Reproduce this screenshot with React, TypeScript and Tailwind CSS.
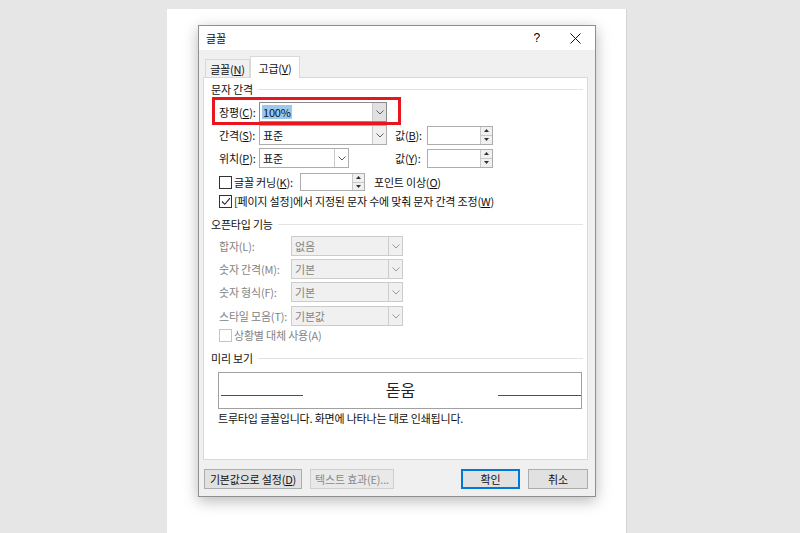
import React from "react";

const F = "font-['Noto_Sans_CJK_KR','Noto_Sans',sans-serif] tracking-[-0.2px]";

function Chevron({ color = "#606060" }: { color?: string }) {
  return (
    <svg width="8" height="5" viewBox="0 0 8 5">
      <path d="M0.5 0.5 L4 4 L7.5 0.5" fill="none" stroke={color} strokeWidth="1" />
    </svg>
  );
}

function Combo({
  w,
  value,
  disabled,
  arrowBg = "bg-[#f0f0f0]",
  selected,
  highlight,
}: {
  w: string;
  value: string;
  disabled?: boolean;
  arrowBg?: string;
  selected?: boolean;
  highlight?: boolean;
}) {
  return (
    <div
      className={`${w} h-[20px] flex border ${
        disabled ? "border-[#cccccc] bg-[#f0f0f0]" : highlight ? "border-[#8a8a8a] bg-white" : "border-[#adadad] bg-white"
      }`}
    >
      <div className="flex-1 flex items-center pl-[2px]">
        <span
          className={`text-[11px] leading-[14px] px-[1px] ${
            disabled ? "text-[#838383]" : "text-[#111]"
          } ${selected ? "bg-[#99c9ef]" : ""}`}
        >
          {value}
        </span>
      </div>
      <div
        className={`w-[14px] h-full flex items-center justify-center border-l ${
          disabled ? "border-[#cccccc] bg-[#f0f0f0]" : `border-[#c8c8c8] ${arrowBg}`
        }`}
      >
        <Chevron color={disabled ? "#9a9a9a" : "#606060"} />
      </div>
    </div>
  );
}

function Spin({ w, h = "h-[19px]" }: { w: string; h?: string }) {
  return (
    <div className={`${w} ${h} flex border border-[#adadad] bg-white`}>
      <div className="flex-1" />
      <div className="w-[12px] h-full flex flex-col border-l border-[#c8c8c8] bg-[#f0f0f0]">
        <div className="flex-1 flex items-center justify-center border-b border-[#c8c8c8]">
          <svg width="5" height="3" viewBox="0 0 5 3">
            <path d="M0 3 L2.5 0 L5 3 Z" fill="#303030" />
          </svg>
        </div>
        <div className="flex-1 flex items-center justify-center">
          <svg width="5" height="3" viewBox="0 0 5 3">
            <path d="M0 0 L2.5 3 L5 0 Z" fill="#303030" />
          </svg>
        </div>
      </div>
    </div>
  );
}

function Check({ checked, disabled }: { checked?: boolean; disabled?: boolean }) {
  return (
    <div
      className={`w-[13px] h-[13px] border bg-white flex items-center justify-center shrink-0 ${
        disabled ? "border-[#c4c4c4]" : "border-[#333333]"
      }`}
    >
      {checked && (
        <svg width="10" height="9" viewBox="0 0 10 9">
          <path d="M1 4.5 L3.8 7.3 L9 1.2" fill="none" stroke="#222" strokeWidth="1.1" />
        </svg>
      )}
    </div>
  );
}

function Header({ text }: { text: string }) {
  return (
    <div className="h-[14px] flex items-center pl-[7px] pr-[4px]">
      <span className="text-[11px] leading-[14px] text-[#111] whitespace-nowrap">{text}</span>
      <div className="flex-1 h-px bg-[#e3e3e3] ml-[5px]" />
    </div>
  );
}

function Lbl({ children, w, disabled }: { children: React.ReactNode; w?: string; disabled?: boolean }) {
  return (
    <span
      className={`${w ?? ""} shrink-0 text-[11px] leading-[14px] whitespace-nowrap ${
        disabled ? "text-[#838383]" : "text-[#111]"
      }`}
    >
      {children}
    </span>
  );
}

export default function App() {
  return (
    <div className={`w-[800px] h-[533px] bg-[#e6e6e6] relative overflow-hidden ${F}`}>
      {/* page */}
      <div className="ml-[167px] mt-[9px] w-[460px] h-[524px] bg-white border-r border-[#d4d4d4]" />

      {/* dialog window */}
      <div className="absolute left-[198px] top-[25px] w-[398px] h-[472px] border border-[#8f8f8f] bg-[#f0f0f0] shadow-[0_4px_14px_rgba(0,0,0,0.28)] flex flex-col">
        {/* title bar */}
        <div className="h-[24px] bg-white flex items-center shrink-0">
          <span className="ml-[7px] text-[11px] leading-[14px] text-[#111]">글꼴</span>
          <div className="flex-1" />
          <span className="text-[12px] leading-[14px] text-black mr-[30px] font-['Liberation_Sans',sans-serif]">?</span>
          <svg width="11" height="11" viewBox="0 0 11 11" className="mr-[14px]">
            <path d="M0.5 0.5 L10.5 10.5 M10.5 0.5 L0.5 10.5" stroke="#111" strokeWidth="1" />
          </svg>
        </div>

        {/* tabs */}
        <div className="mt-[6px] h-[21px] flex items-end pl-[6px] shrink-0">
          <div className="w-[45px] h-[18px] border border-b-0 border-[#d9d9d9] bg-[#f0f0f0] flex items-center justify-center">
            <span className="text-[11px] leading-[14px] text-[#111]">
              글꼴(<u>N</u>)
            </span>
          </div>
          <div className="w-[50px] h-[22px] border border-b-0 border-[#d9d9d9] bg-white flex items-center justify-center relative z-10 -mb-px">
            <span className="text-[11px] leading-[14px] text-[#111]">
              고급(<u>V</u>)
            </span>
          </div>
        </div>

        {/* panel */}
        <div className="ml-[4px] w-[385px] h-[383px] border border-[#d9d9d9] bg-white relative shrink-0">
          <div className="mt-[4px]">
            <Header text="문자 간격" />
          </div>

          {/* 장평 */}
          <div className="mt-[6px] h-[20px] flex items-center pl-[15px]">
            <Lbl w="w-[40px]">
              장평(<u>C</u>):
            </Lbl>
            <Combo w="w-[128px]" value="100%" selected highlight arrowBg="bg-[#e1e1e1]" />
          </div>

          {/* 간격 */}
          <div className="mt-[3px] h-[20px] flex items-center pl-[15px]">
            <Lbl w="w-[40px]">
              간격(<u>S</u>):
            </Lbl>
            <Combo w="w-[128px]" value="표준" />
            <Lbl w="w-[32px] ml-[8px]">
              값(<u>B</u>):
            </Lbl>
            <Spin w="w-[66px]" />
          </div>

          {/* 위치 */}
          <div className="mt-[3px] h-[20px] flex items-center pl-[15px]">
            <Lbl w="w-[40px]">
              위치(<u>P</u>):
            </Lbl>
            <Combo w="w-[90px]" value="표준" arrowBg="bg-white" />
            <Lbl w="w-[32px] ml-[46px]">
              값(<u>Y</u>):
            </Lbl>
            <Spin w="w-[66px]" />
          </div>

          {/* 커닝 */}
          <div className="mt-[5px] h-[18px] flex items-center pl-[15px]">
            <Check />
            <Lbl w="w-[66px] ml-[2px]">
              글꼴 커닝(<u>K</u>):
            </Lbl>
            <Spin w="w-[65px]" h="h-[18px]" />
            <Lbl w="ml-[9px]">
              포인트 이상(<u>O</u>)
            </Lbl>
          </div>

          {/* 페이지 설정 */}
          <div className="mt-[3px] h-[14px] flex items-center pl-[15px]">
            <Check checked />
            <Lbl w="ml-[2px]">
              [페이지 설정]에서 지정된 문자 수에 맞춰 문자 간격 조정(<u>W</u>)
            </Lbl>
          </div>

          <div className="mt-[9px]">
            <Header text="오픈타입 기능" />
          </div>

          {[
            { l: "합자(L):", v: "없음", mt: "mt-[5px]" },
            { l: "숫자 간격(M):", v: "기본", mt: "mt-[3px]" },
            { l: "숫자 형식(F):", v: "기본", mt: "mt-[3px]" },
            { l: "스타일 모음(T):", v: "기본값", mt: "mt-[4px]" },
          ].map((r) => (
            <div key={r.l} className={`${r.mt} h-[20px] flex items-center pl-[15px]`}>
              <Lbl w="w-[72px]" disabled>
                {r.l}
              </Lbl>
              <Combo w="w-[112px]" value={r.v} disabled />
            </div>
          ))}

          <div className="mt-[2px] h-[14px] flex items-center pl-[15px]">
            <Check disabled />
            <Lbl w="ml-[2px]" disabled>
              상황별 대체 사용(A)
            </Lbl>
          </div>

          <div className="mt-[9px]">
            <Header text="미리 보기" />
          </div>

          {/* preview */}
          <div className="mt-[7px] ml-[14px] w-[364px] h-[37px] border border-[#a0a0a0] bg-white flex items-end pb-[12px]">
            <div className="w-[82px] h-px bg-[#505050] ml-[2px]" />
            <div className="flex-1 flex justify-center">
              <span className="text-[16px] leading-[20px] text-[#222] mb-[-3px] tracking-normal">돋움</span>
            </div>
            <div className="w-[83px] h-px bg-[#505050]" />
          </div>

          <div className="mt-[2px] h-[14px] flex items-center pl-[14px]">
            <Lbl>트루타입 글꼴입니다. 화면에 나타나는 대로 인쇄됩니다.</Lbl>
          </div>

          {/* red annotation box */}
          <div className="absolute left-[8px] top-[19px] w-[189px] h-[28px] border-[3px] border-[#e8151f] pointer-events-none" />
        </div>

        {/* buttons */}
        <div className="mt-[9px] h-[20px] flex items-center pl-[5px] shrink-0">
          <div className="w-[98px] h-[20px] border border-[#adadad] bg-[#e1e1e1] flex items-center justify-center">
            <span className="text-[11px] leading-[14px] text-[#111]">
              기본값으로 설정(<u>D</u>)
            </span>
          </div>
          <div className="ml-[8px] w-[84px] h-[20px] border border-[#cfcfcf] bg-[#e9e9e9] flex items-center justify-center">
            <span className="text-[11px] leading-[14px] text-[#8a8a8a]">텍스트 효과(E)...</span>
          </div>
          <div className="flex-1" />
          <div className="w-[59px] h-[20px] border-2 border-[#0078d7] bg-[#e1e1e1] flex items-center justify-center">
            <span className="text-[11px] leading-[14px] text-[#111]">확인</span>
          </div>
          <div className="ml-[8px] mr-[7px] w-[60px] h-[20px] border border-[#adadad] bg-[#e1e1e1] flex items-center justify-center">
            <span className="text-[11px] leading-[14px] text-[#111]">취소</span>
          </div>
        </div>
      </div>
    </div>
  );
}
